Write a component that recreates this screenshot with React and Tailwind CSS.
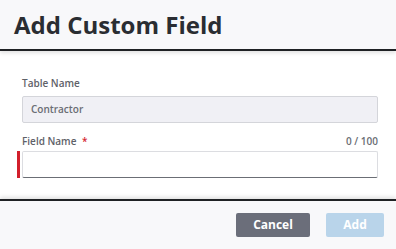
export default function App() {
	return (
		<div className="flex h-[249px] w-[396px] flex-col overflow-hidden bg-white font-['Open_Sans',sans-serif]">
			<div className="relative z-10 flex h-[51px] shrink-0 items-center border-b-2 border-[#1f2124] bg-[#f8f8fa] px-[14px] shadow-[0_2px_4px_rgba(0,0,0,0.12)]">
				<h1 className="text-[24px] font-bold leading-none text-[#2a2d32]">Add Custom Field</h1>
			</div>

			<div className="flex flex-1 flex-col px-[22px] pt-[26px] pr-[18px]">
				<label className="mb-[6px] block text-[10px] font-semibold leading-[13px] text-[#5e6168]">Table Name</label>
				<div className="flex h-[27px] items-center rounded-[2px] border border-[#d4d5da] bg-[#f0f0f5] px-[8px] text-[10px] font-semibold text-[#6a6d74]">
					Contractor
				</div>

				<div className="mt-[12px] mb-[3px] flex items-center justify-between text-[10px] font-semibold leading-[13px]">
					<span className="text-[#5e6168]">
						Field Name <span className="ml-[3px] text-[#d5262f]">*</span>
					</span>
					<span className="text-[#6a6d74]">0 / 100</span>
				</div>
				<div className="relative">
					<span className="absolute -left-[5px] top-0 h-full w-[3px] bg-[#d21f2b]" />
					<input
						className="block h-[27px] w-full rounded-[2px] border border-[#dcdde1] border-b-[#6b6e75] bg-white px-[8px] text-[10px] outline-none"
						defaultValue=""
					/>
				</div>
			</div>

			<div className="relative z-10 flex h-[50px] shrink-0 items-center justify-end gap-[16px] border-t-2 border-[#1f2124] bg-[#f8f8fa] pr-[12px] shadow-[0_-2px_4px_rgba(0,0,0,0.12)]">
				<button className="h-[24px] w-[74px] rounded-[2px] bg-[#6b6e7a] text-[12px] font-bold text-white">Cancel</button>
				<button className="h-[24px] w-[58px] rounded-[2px] bg-[#b9d4ea] text-[12px] font-bold text-white">Add</button>
			</div>
		</div>
	)
}
